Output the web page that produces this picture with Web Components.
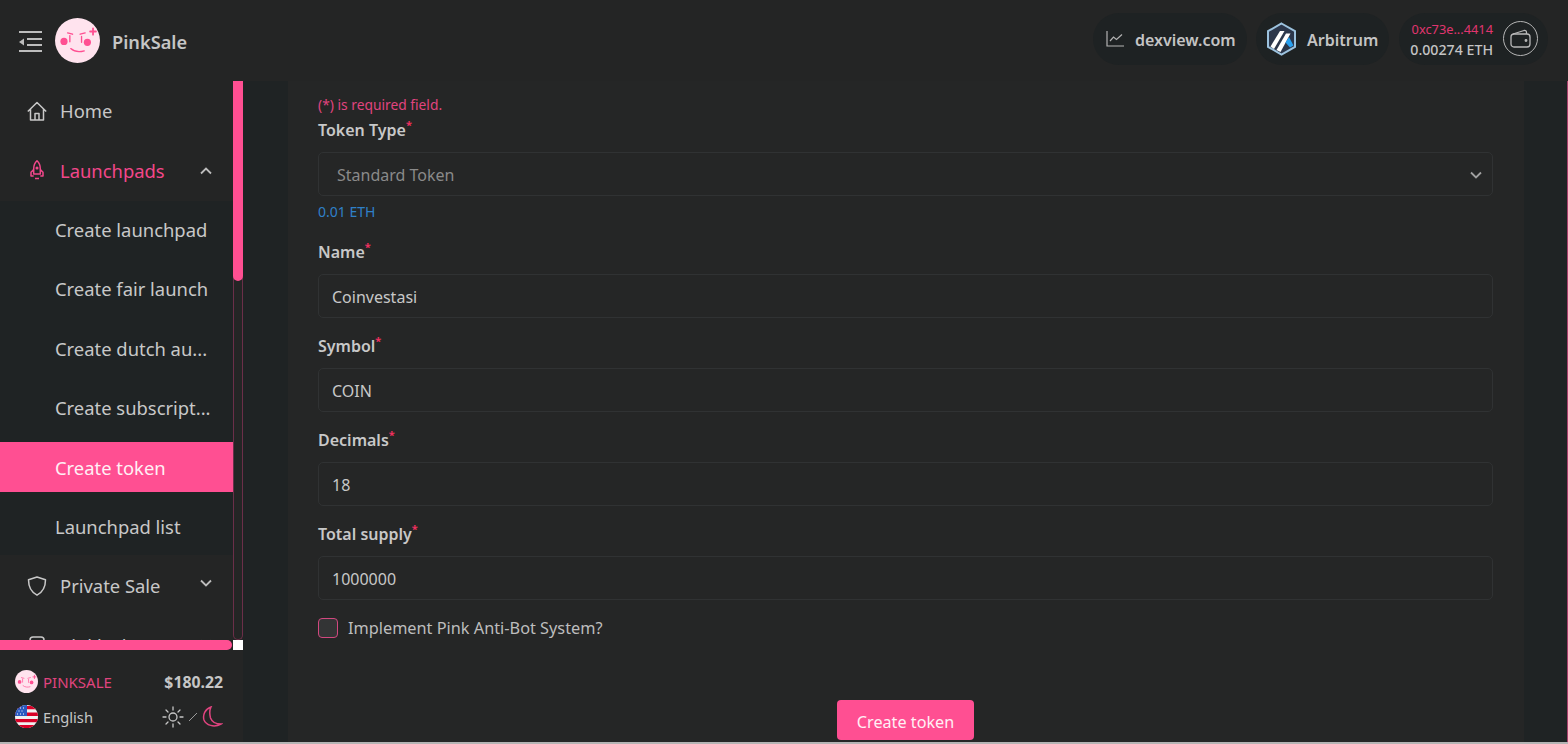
<!DOCTYPE html>
<html lang="en">
<head>
<meta charset="utf-8">
<title>PinkSale</title>
<style>
  html, body { margin: 0; height: 744px; overflow: hidden; background: #242525; }
  body { font-family: "Noto Sans", "Open Sans", sans-serif; color: #c9c9c9; }
</style>
</head>
<body>
<app-shell>
  <top-bar slot="top"></top-bar>
  <side-nav slot="side"></side-nav>
  <token-form slot="main"></token-form>
</app-shell>

<script>
const FACE = `
  <circle cx="50" cy="50" r="50" fill="#ffe3ee"/>
  <circle cx="20" cy="52" r="8" fill="#ff4f92"/><circle cx="72" cy="54" r="8" fill="#ff4f92"/>
  <g fill="none" stroke="#ff4f92" stroke-width="3" stroke-linecap="round">
    <path d="M28 33l11 3M33 39v14M56 36l11-3M59 41v13M35 68c8 7 20 8 30 5"/>
    <path d="M78 30h13M84.500 23v14" stroke-width="4"/>
  </g>`;

// barra superior con logo, dexview, red y cartera
class TopBar extends HTMLElement {
  constructor() {
    super();
    this.attachShadow({ mode: "open" });
    this.shadowRoot.innerHTML = `
      <style>
        :host { display: flex; align-items: center; height: 81px; box-sizing: border-box; padding: 0 20px 0 19px; background: #242525; }
        .menu { width: 23px; height: 22px; display: block; margin-right: 13px; }
        .logo { width: 45px; height: 45px; display: block; margin-right: 12px; }
        .brand { font-size: 18.200px; font-weight: 600; color: #c6c6c6; flex: 1; padding-top: 2px; }
        .pill { display: flex; align-items: center; height: 52px; border-radius: 26px; background: #1e2223; box-sizing: border-box; font-size: 16px; font-weight: 600; color: #c4c4c4; margin-top: -4px; padding-top: 3px; }
        .pill svg { margin-top: -3px; flex: none; }
        .dex { width: 154px; padding-left: 13px; gap: 11px; margin-right: 9px; }
        .net { width: 133px; padding-left: 10px; gap: 10px; margin-right: 10px; }
        .wallet { width: 149px; padding-left: 10px; padding-top: 2px; gap: 10px; }
        .acct { display: flex; flex-direction: column; align-items: flex-end; font-size: 14.200px; line-height: 19.500px; width: 84px; font-weight: 500; }
        .acct span:first-child { color: #e0356f; font-weight: 400; font-size: 12.800px; }
        .round { width: 33px; height: 33px; border: 1px solid #b5b5b5; border-radius: 50%; display: flex; align-items: center; justify-content: center; margin-top: -2px; }
        .round svg { margin: 0; }
      </style>
      <svg class="menu" viewBox="0 0 23 22" fill="none" stroke="#bdbdbd" stroke-width="2">
        <path d="M0 2h23M8 9h15M8 15h15M0 21h23"/><path d="M0 12l5-3.500v7z" fill="#bdbdbd" stroke="none"/>
      </svg>
      <svg class="logo" viewBox="0 0 100 100">${FACE}</svg>
      <span class="brand">PinkSale</span>
      <div class="pill dex">
        <svg width="18" height="16" viewBox="0 0 18 16" fill="none" stroke="#b3b3b3" stroke-width="1.200"><path d="M1 0v15h17M4 10l3.500-4 3 2.500L16 3.500"/></svg>
        <span>dexview.com</span>
      </div>
      <div class="pill net">
        <svg width="31" height="34" viewBox="0 0 31 34">
          <path d="M15.500 1.500 29 9.200v15.600L15.500 32.500 2 24.800V9.200z" fill="#2c374b" stroke="#9cc2de" stroke-width="2"/>
          <path d="M4.500 24.500 14 9h4.500L8 27z" fill="#fff"/>
          <path d="M10.500 28 20 11.500h4.500L14.500 30z" fill="#fff"/>
          <path d="M19.500 20.500 23 15l4.500 8.500-3.500 2z" fill="#28a0f0"/>
        </svg>
        <span>Arbitrum</span>
      </div>
      <div class="pill wallet">
        <div class="acct"><span>0xc73e...4414</span><span>0.00274 ETH</span></div>
        <div class="round">
          <svg width="21" height="19" viewBox="0 0 21 19" fill="none" stroke="#b9b9b9" stroke-width="1.300"><path d="M3 5 14 1.500c1.500-.4 2.500.5 2.500 2V5"/><rect x="1" y="5" width="19" height="13" rx="3"/><circle cx="16" cy="11.500" r=".8" fill="#b9b9b9"/></svg>
        </div>
      </div>`;
  }
}

// una fila del menu lateral
class NavItem extends HTMLElement {
  constructor() {
    super();
    this.attachShadow({ mode: "open" });
  }
  connectedCallback() {
    const icons = {
      home: '<path d="M.8 10.500 10 1.500l9.200 9M3.500 8V19h13V8M8 19v-6.500h4V19"/>',
      rocket: '<path d="M10 .8c2.400 2.200 3.300 5 3.300 8V14H6.700V8.800c0-3 .9-5.800 3.300-8zM6.700 9.500 4 12.300V16h2.700M13.300 9.500l2.700 2.800V16h-2.700M8 18.500h4"/><circle cx="10" cy="8" r=".8"/>',
      shield: '<path d="M10 1 18.500 3.800c0 7.500-2 12-8.500 15.400C3.500 15.800 1.500 11.300 1.500 3.800z"/>',
      lock: '<rect x="3" y="2" width="14" height="17" rx="3"/>'
    };
    const icon = this.getAttribute("icon");
    const chev = this.getAttribute("chevron");
    this.shadowRoot.innerHTML = `
      <style>
        :host { display: flex; align-items: center; position: relative; height: 49.400px; margin-bottom: 10px; font-size: 18.400px; color: #c8c8c8; box-sizing: border-box; padding-left: 55px; }
        :host([icon]) { padding-left: 27px; }
        :host([pink]) { color: #f2478a; }
        :host([active]) { background: #ff4f92; color: #fff0f5; }
        svg.i { width: 20px; height: 20px; margin-right: 13px; flex: none; }
        .chev { position: absolute; left: 199px; top: ${chev === "up" ? 19 : 15}px; width: 14px; height: 14px; }
      </style>
      ${icon ? `<svg class="i" viewBox="0 0 20 20" fill="none" stroke="currentColor" stroke-width="1.500" stroke-linejoin="round">${icons[icon]}</svg>` : ""}
      <slot></slot>
      ${chev ? `<svg class="chev" viewBox="0 0 14 14" fill="none" stroke="#bdbdbd" stroke-width="1.800"><path d="${chev === "up" ? "M2 9.500l5-5 5 5" : "M2 4.500l5 5 5-5"}"/></svg>` : ""}`;
  }
}

// menu lateral y pie con precio e idioma
class SideNav extends HTMLElement {
  constructor() {
    super();
    this.attachShadow({ mode: "open" });
    this.shadowRoot.innerHTML = `
      <style>
        :host { display: flex; flex-direction: column; width: 243px; height: 661px; background: #242525; position: relative; }
        .menu { height: 554px; overflow: hidden; padding-top: 5px; width: 233px; }
        .sub { background: #1f2324; padding: 4px 0; margin: -4px 0 6px; }
        .sub nav-item:last-child { margin-bottom: 0; }
        .vtrack { position: absolute; left: 233px; top: 0; width: 10px; height: 559px; box-sizing: border-box; border: 1px solid #6b2f49; border-top: 0; border-radius: 0 0 5px 5px; }
        .vthumb { position: absolute; left: 233px; top: 0; width: 10px; height: 200px; background: #ff4f92; border-radius: 0 0 5px 5px; }
        .hthumb { position: absolute; left: 0; top: 559px; width: 232px; height: 10px; background: #ff4f92; border-radius: 0 5px 5px 0; }
        .corner { position: absolute; left: 233px; top: 559px; width: 10px; height: 10px; background: #fff; }
        .foot { margin-top: 10px; padding: 20px 20px 0 15px; display: grid; grid-template-columns: 1fr auto; row-gap: 12px; align-items: center; font-size: 14.700px; color: #c6c6c6; }
        .tok { display: flex; align-items: center; gap: 5px; height: 23px; }
        .tok.pink { color: #e0447f; font-size: 15px; }
        .price { font-weight: 700; font-size: 15.800px; justify-self: end; }
        .modes { display: flex; align-items: center; gap: 5px; }
      </style>
      <div class="menu">
        <nav-item icon="home">Home</nav-item>
        <nav-item icon="rocket" chevron="up" pink>Launchpads</nav-item>
        <div class="sub">
          <nav-item>Create launchpad</nav-item>
          <nav-item>Create fair launch</nav-item>
          <nav-item>Create dutch au...</nav-item>
          <nav-item>Create subscript...</nav-item>
          <nav-item active>Create token</nav-item>
          <nav-item>Launchpad list</nav-item>
        </div>
        <nav-item icon="shield" chevron="down">Private Sale</nav-item>
        <nav-item icon="lock" chevron="down">Pinklock</nav-item>
      </div>
      <div class="vtrack"></div><div class="vthumb"></div><div class="hthumb"></div><div class="corner"></div>
      <div class="foot">
        <div class="tok pink">
          <svg width="23" height="23" viewBox="0 0 100 100">${FACE}</svg>PINKSALE
        </div>
        <div class="price">$180.22</div>
        <div class="tok">
          <svg width="23" height="23" viewBox="0 0 23 23">
            <defs><clipPath id="c"><circle cx="11.500" cy="11.500" r="11.500"/></clipPath></defs>
            <g clip-path="url(#c)">
              <rect width="23" height="23" fill="#f0f0f0"/>
              <path d="M0 1h23v3.300H0zM0 7.600h23v3.300H0zM0 14h23v3.300H0zM0 20h23v3H0z" fill="#d80027"/>
              <rect width="12" height="11" fill="#2a5ac0"/>
              <path d="M2 3h1M5 3h1M8 3h1M3.500 6h1M6.500 6h1M2 9h1M5 9h1M8 9h1" stroke="#fff" stroke-width="1"/>
            </g>
          </svg>English
        </div>
        <div class="modes">
          <svg width="22" height="22" viewBox="0 0 22 22" fill="none" stroke="#c6c6c6" stroke-width="1.300" stroke-linecap="round"><circle cx="11" cy="11" r="4"/><path d="M11 1v3M11 18v3M1 11h3M18 11h3M4 4l2 2M16 16l2 2M18 4l-2 2M6 16l-2 2"/></svg>
          <svg width="8" height="10" viewBox="0 0 8 10" stroke="#9a9a9a" stroke-width="1"><path d="M0 9l8-8"/></svg>
          <svg width="21" height="22" viewBox="0 0 21 22" fill="none" stroke="#e0447f" stroke-width="1.500"><path d="M9 1C3 3 .5 9 2 14c2 5 10 8 17 4-6 0-9-2-10.500-6C7.500 8 7.500 4 9 1z"/></svg>
        </div>
      </div>`;
  }
}

// campo del formulario: etiqueta y caja
class FormField extends HTMLElement {
  constructor() {
    super();
    this.attachShadow({ mode: "open" });
  }
  connectedCallback() {
    const isSelect = this.hasAttribute("select");
    this.shadowRoot.innerHTML = `
      <style>
        :host { display: block; }
        label { display: block; font-size: 16px; font-weight: 600; line-height: 22px; color: #c8c8c8; margin-bottom: 11px; }
        sup { color: #f0305f; font-size: 11px; line-height: 0; font-weight: 700; position: relative; top: -1px; vertical-align: super; }
        .box { height: 44px; box-sizing: border-box; border: 1px solid #303233; border-radius: 5px; display: flex; align-items: center; padding: 2px 0 0 13px; font-size: 16px; color: #c8c8c8; justify-content: space-between; }
        .box.sel { padding-left: 18px; padding-right: 10px; color: #8a8a8a; }
        svg { display: block; }
      </style>
      <label>${this.getAttribute("label")}<sup>*</sup></label>
      <div class="box ${isSelect ? "sel" : ""}">
        <span>${this.getAttribute("value")}</span>
        ${isSelect ? '<svg width="12" height="8" viewBox="0 0 12 8" fill="none" stroke="#a0a0a0" stroke-width="1.800"><path d="M1 1.500l5 5 5-5"/></svg>' : ""}
      </div>
      <slot></slot>`;
  }
}

// tarjeta principal con el formulario
class TokenForm extends HTMLElement {
  constructor() {
    super();
    this.attachShadow({ mode: "open" });
    this.shadowRoot.innerHTML = `
      <style>
        :host { display: block; height: 661px; background: #1f2324; padding: 0 43px 0 45px; overflow: hidden; box-sizing: border-box; border-right: 1px solid #a8406e; }
        .card { background: #252626; height: 100%; padding: 14px 31px 0 30px; box-sizing: border-box; display: flex; flex-direction: column; }
        .req { font-size: 13.800px; line-height: 20px; color: #e0447f; margin-bottom: 4px; }
        .fee { font-size: 14px; line-height: 20px; color: #2f80c8; margin-top: 6px; }
        form-field { margin-bottom: 17px; }
        .first { margin-bottom: 19px; }
        .check { display: flex; align-items: center; gap: 10px; font-size: 16.300px; line-height: 22px; color: #bdbdbd; }
        .check i { width: 18px; height: 18px; border: 1px solid #d2487f; border-radius: 4px; background: #333435; }
        .act { display: flex; justify-content: center; margin-top: 61px; }
        .act span { width: 137px; height: 40px; box-sizing: border-box; padding-top: 3px; background: #ff4f92; border-radius: 4px; color: #fff0f5; font-size: 16.200px; display: flex; align-items: center; justify-content: center; }
      </style>
      <div class="card">
        <div class="req">(*) is required field.</div>
        <form-field class="first" select label="Token Type" value="Standard Token"><div class="fee">0.01 ETH</div></form-field>
        <form-field label="Name" value="Coinvestasi"></form-field>
        <form-field label="Symbol" value="COIN"></form-field>
        <form-field label="Decimals" value="18"></form-field>
        <form-field label="Total supply" value="1000000"></form-field>
        <div class="check"><i></i>Implement Pink Anti-Bot System?</div>
        <div class="act"><span>Create token</span></div>
      </div>`;
  }
}

class AppShell extends HTMLElement {
  constructor() {
    super();
    this.attachShadow({ mode: "open" });
    this.shadowRoot.innerHTML = `
      <style>
        :host { display: grid; grid-template-columns: 243px 1fr; grid-template-rows: 81px 661px; height: 744px; overflow: hidden; position: relative; }
        .top { grid-column: 1 / 3; }
        .line { position: absolute; left: 0; right: 0; bottom: 0; height: 2px; background: #b4b4b4; }
      </style>
      <div class="top"><slot name="top"></slot></div>
      <slot name="side"></slot>
      <slot name="main"></slot>
      <div class="line"></div>`;
  }
}

customElements.define("top-bar", TopBar);
customElements.define("nav-item", NavItem);
customElements.define("side-nav", SideNav);
customElements.define("form-field", FormField);
customElements.define("token-form", TokenForm);
customElements.define("app-shell", AppShell);
</script>
</body>
</html>
